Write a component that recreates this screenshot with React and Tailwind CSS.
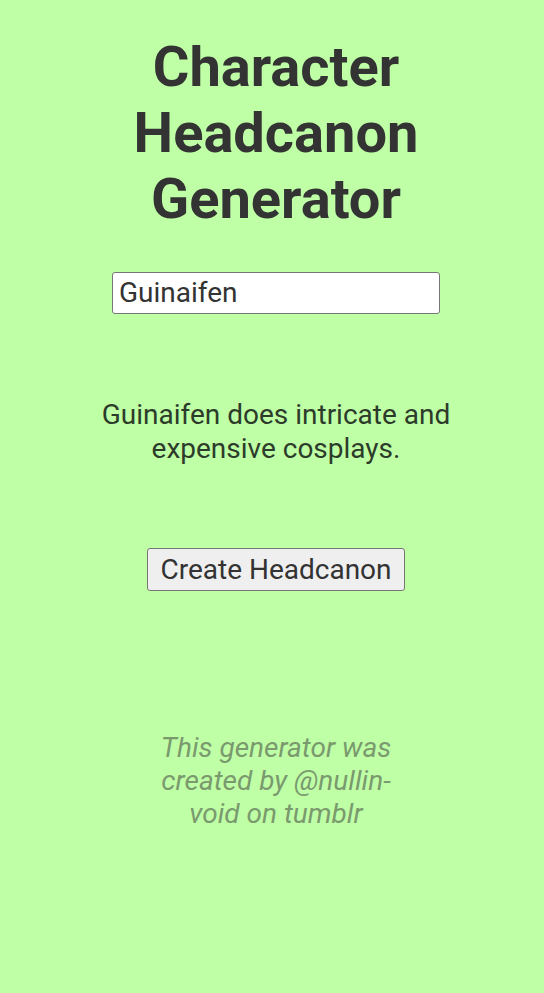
export default function App() {
  return (
    <div className="min-h-[993px] w-full bg-[#bfffa6] text-[#333333] flex flex-col items-center pl-[8px]" style={{ fontFamily: "Roboto, 'Liberation Sans', sans-serif" }}>
      <h1 className="mt-[34px] text-[56px] leading-[66px] font-bold text-center w-[320px]">
        Character Headcanon Generator
      </h1>
      <input
        type="text"
        defaultValue="Guinaifen"
        className="mt-[40px] w-[328px] h-[42px] bg-white border border-[#767676] rounded-[3px] px-[6px] text-[28px] text-[#333333] outline-none"
      />
      <p className="mt-[84px] w-[360px] text-center text-[28px] leading-[34px] text-[#2d3b2a]">
        Guinaifen does intricate and expensive cosplays.
      </p>
      <button className="mt-[82px] h-[43px] px-[12px] bg-[#efefef] border border-[#767676] rounded-[3px] text-[28px] text-[#333333]">
        Create Headcanon
      </button>
      <p className="mt-[140px] w-[240px] text-center italic text-[28px] leading-[33px] text-[#7a9a6e]">
        This generator was created by @nullin-void on tumblr
      </p>
    </div>
  );
}
